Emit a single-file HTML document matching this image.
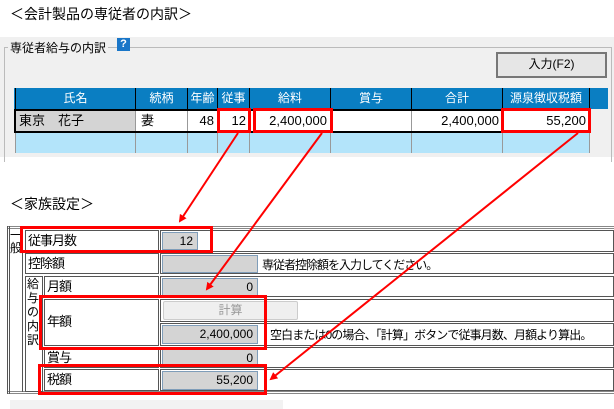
<!DOCTYPE html>
<html><head><meta charset="utf-8"><style>
*{margin:0;padding:0;box-sizing:border-box}
body{width:614px;height:409px;background:#fff;position:relative;overflow:hidden;font-family:"Liberation Sans","Noto Sans CJK JP",sans-serif;font-size:13px;color:#000}
.a{position:absolute;white-space:nowrap}
.hd{position:absolute;top:88px;height:21px;background:#0a7ec2;color:#fff;text-align:center;line-height:21px;border-right:1px solid #000;font-size:12px}
.dc{position:absolute;top:110px;height:22px;background:#fff;line-height:22px;text-align:right;padding-right:3px;border-right:1px solid #999}
.lb{position:absolute;top:131px;height:22px;background:#b3e4fa;border-right:1px solid #999}
.cell{position:absolute;border:1px solid #555;background:#fff;line-height:19px;padding-left:2px}
.inp{position:absolute;background:#d4d4d4;border:1px solid #7f9db9;text-align:right;padding-right:4px;line-height:16px;font-size:12px}
.red{position:absolute;border:3px solid #f00}
.hl{position:absolute;height:1px;background:#888}
.t{font-size:12px;letter-spacing:-1px}
</style></head><body>
<div class="a" style="left:10px;top:4px;font-size:14px">＜会計製品の専従者の内訳＞</div>
<div class="a" style="left:0;top:37px;width:614px;height:120px;background:#f0f0f0"></div>
<div class="a" style="left:4px;top:47px;width:608px;height:115px;border:1px solid #bbb;border-bottom:none"></div>
<div class="a" style="left:8px;top:39px;background:#f0f0f0;padding:0 2px;font-size:12px">専従者給与の内訳</div>
<div class="a" style="left:117px;top:38px;width:13px;height:13px;background:#1976c8;color:#fff;font-size:11px;font-weight:bold;text-align:center;line-height:13px">?</div>
<div class="a" style="left:496px;top:52px;width:111px;height:26px;border:2px solid #777;background:#e6e6e6;text-align:center;line-height:21px;font-size:12px">入力(F2)</div>
<div class="a" style="left:14px;top:88px;width:594px;height:21px;background:#0a7ec2"></div>
<div class="hd" style="left:15px;width:121px;border-left:1px solid #000">氏名</div>
<div class="hd" style="left:136px;width:52px">続柄</div>
<div class="hd" style="left:188px;width:30px">年齢</div>
<div class="hd" style="left:218px;width:32px">従事</div>
<div class="hd" style="left:250px;width:81px">給料</div>
<div class="hd" style="left:331px;width:81px">賞与</div>
<div class="hd" style="left:412px;width:91px">合計</div>
<div class="hd" style="left:503px;width:87px">源泉徴収税額</div>
<div class="lb" style="left:15px;width:121px;border-left:1px solid #999"></div><div class="lb" style="left:136px;width:52px"></div><div class="lb" style="left:188px;width:30px"></div><div class="lb" style="left:218px;width:32px"></div><div class="lb" style="left:250px;width:81px"></div><div class="lb" style="left:331px;width:81px"></div><div class="lb" style="left:412px;width:91px"></div><div class="lb" style="left:503px;width:87px"></div>
<div class="dc" style="left:15px;width:121px;background:#d4d4d4;text-align:left;padding-left:4px">東京　花子</div>
<div class="dc" style="left:136px;width:52px;text-align:left;padding-left:5px">妻</div>
<div class="dc" style="left:188px;width:30px">48</div>
<div class="dc" style="left:218px;width:32px">12</div>
<div class="dc" style="left:250px;width:81px">2,400,000</div>
<div class="dc" style="left:331px;width:81px"></div>
<div class="dc" style="left:412px;width:91px">2,400,000</div>
<div class="dc" style="left:503px;width:87px">55,200</div>
<div class="a" style="left:14px;top:109px;width:577px;height:24px;border:2px solid #000"></div>
<div class="red" style="left:217px;top:108px;width:34px;height:25px"></div>
<div class="red" style="left:253px;top:108px;width:80px;height:25px"></div>
<div class="red" style="left:501px;top:108px;width:90px;height:25px"></div>

<div class="a" style="left:10px;top:194px;font-size:14px">＜家族設定＞</div>
<div class="hl" style="left:7px;top:226px;width:607px"></div>
<div class="hl" style="left:7px;top:228px;width:607px"></div>
<div class="hl" style="left:7px;top:391px;width:607px"></div>
<div class="hl" style="left:7px;top:393px;width:607px"></div>
<div class="a" style="left:7px;top:226px;width:3px;height:168px;border-left:1px solid #555;border-right:1px solid #555"></div>
<div class="a" style="left:22px;top:229px;width:1px;height:163px;background:#555"></div>
<div class="a" style="left:10px;top:229px;width:12px;font-size:12px;line-height:13px;overflow:hidden">一<br>般</div>
<div class="cell t" style="left:25px;top:230px;width:134px;height:22px;font-size:13px">従事月数</div>
<div class="cell t" style="left:25px;top:253px;width:134px;height:21px;font-size:13px">控除額</div>
<div class="cell" style="left:25px;top:276px;width:18px;height:116px;font-size:12px;line-height:14px;padding-left:1px;overflow:hidden">給<br>与<br>の<br>内<br>訳</div>
<div class="cell t" style="left:44px;top:276px;width:115px;height:21px;font-size:13px">月額</div>
<div class="cell t" style="left:44px;top:299px;width:115px;height:47px;line-height:44px;font-size:13px">年額</div>
<div class="cell t" style="left:44px;top:347px;width:115px;height:21px;font-size:13px">賞与</div>
<div class="cell t" style="left:44px;top:369px;width:115px;height:22px;font-size:13px">税額</div>
<div class="cell" style="left:160px;top:230px;width:454px;height:22px"></div>
<div class="cell" style="left:160px;top:253px;width:454px;height:21px"></div>
<div class="cell" style="left:160px;top:276px;width:454px;height:21px"></div>
<div class="cell" style="left:160px;top:299px;width:454px;height:23px"></div>
<div class="cell" style="left:160px;top:323px;width:454px;height:23px"></div>
<div class="cell" style="left:160px;top:347px;width:454px;height:21px"></div>
<div class="cell" style="left:160px;top:369px;width:454px;height:22px"></div>
<div class="inp" style="left:162px;top:232px;width:36px;height:18px">12</div>
<div class="inp" style="left:162px;top:255px;width:96px;height:18px"></div>
<div class="a t" style="left:262px;top:256px">専従者控除額を入力してください。</div>
<div class="inp" style="left:162px;top:278px;width:96px;height:18px">0</div>
<div class="a" style="left:163px;top:301px;width:135px;height:19px;background:#efefef;border:1px solid #ccc;border-radius:2px;color:#999;text-align:center;line-height:17px;font-size:12px">計算</div>
<div class="inp" style="left:162px;top:325px;width:96px;height:19px;line-height:17px">2,400,000</div>
<div class="a t" style="left:270px;top:326px;letter-spacing:-0.9px">空白または0の場合、「計算」ボタンで従事月数、月額より算出。</div>
<div class="inp" style="left:162px;top:349px;width:96px;height:18px">0</div>
<div class="inp" style="left:162px;top:371px;width:96px;height:19px">55,200</div>
<div class="red" style="left:20px;top:226px;width:193px;height:27px"></div>
<div class="red" style="left:39px;top:295px;width:228px;height:55px"></div>
<div class="red" style="left:38px;top:364px;width:229px;height:31px"></div>
<div class="a" style="left:10px;top:400px;width:273px;height:9px;background:#f2f2f2"></div>

<svg class="a" style="left:0;top:0" width="614" height="409">
<defs><marker id="m" markerWidth="8" markerHeight="8" refX="6" refY="4" orient="auto" markerUnits="userSpaceOnUse"><path d="M0,0 L8,4 L0,8 z" fill="#f00"/></marker></defs>
<g stroke="#f00" stroke-width="2" fill="none">
<line x1="238" y1="133" x2="180" y2="221" marker-end="url(#m)"/>
<line x1="322" y1="133" x2="207" y2="289" marker-end="url(#m)"/>
<line x1="578" y1="133" x2="271" y2="379" marker-end="url(#m)"/>
</g></svg>
</body></html>
